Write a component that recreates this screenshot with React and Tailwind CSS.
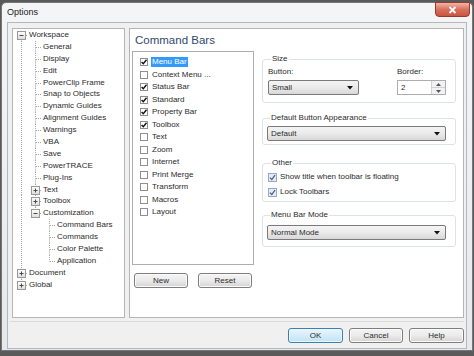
import React from 'react';

const TREE = [
  {
    label: 'Workspace',
    open: true,
    children: [
      'General', 'Display', 'Edit', 'PowerClip Frame', 'Snap to Objects', 'Dynamic Guides',
      'Alignment Guides', 'Warnings', 'VBA', 'Save', 'PowerTRACE', 'Plug-Ins',
      { label: 'Text', closed: true },
      { label: 'Toolbox', closed: true },
      { label: 'Customization', open: true, children: ['Command Bars', 'Commands', 'Color Palette', 'Application'] },
    ],
  },
  { label: 'Document', closed: true },
  { label: 'Global', closed: true },
];

const BARS = [
  ['Menu Bar', true], ['Context Menu ...', false], ['Status Bar', true], ['Standard', true],
  ['Property Bar', true], ['Toolbox', true], ['Text', false], ['Zoom', false], ['Internet', false],
  ['Print Merge', false], ['Transform', false], ['Macros', false], ['Layout', false],
];

function flatten(nodes, guides = [], rows = [], root = true) {
  nodes.forEach((n, i) => {
    const node = typeof n === 'string' ? { label: n } : n;
    const last = i === nodes.length - 1;
    rows.push({
      label: node.label,
      guides,
      last,
      first: root && i === 0,
      toggle: node.open ? 'minus' : node.closed ? 'plus' : null,
    });
    if (node.open) flatten(node.children, [...guides, !last], rows, false);
  });
  return rows;
}

const LINE = '#a5a5a5';

function Guide({ on }) {
  return (
    <svg width="14" height="12" className="shrink-0">
      {on && <line x1="7.5" y1="0" x2="7.5" y2="12" stroke={LINE} strokeDasharray="1 1" />}
    </svg>
  );
}

function Connector({ first, last, toggle }) {
  return (
    <svg width="14" height="12" className="shrink-0">
      {!first && <line x1="7.5" y1="0" x2="7.5" y2="6.5" stroke={LINE} strokeDasharray="1 1" />}
      {!last && <line x1="7.5" y1="6.5" x2="7.5" y2="12" stroke={LINE} strokeDasharray="1 1" />}
      <line x1="8" y1="6.5" x2="14" y2="6.5" stroke={LINE} strokeDasharray="1 1" />
      {toggle && (
        <>
          <defs>
            <linearGradient id="tg" x1="0" y1="0" x2="0" y2="1">
              <stop offset="0" stopColor="#ffffff" />
              <stop offset="1" stopColor="#dcdcdc" />
            </linearGradient>
          </defs>
          <rect x="3.5" y="2.5" width="8" height="8" fill="url(#tg)" stroke="#999999" />
          <line x1="5.5" y1="6.5" x2="9.5" y2="6.5" stroke="#4a4a4a" />
          {toggle === 'plus' && <line x1="7.5" y1="4.5" x2="7.5" y2="8.5" stroke="#4a4a4a" />}
        </>
      )}
    </svg>
  );
}

function Tree() {
  const rows = flatten(TREE);
  return (
    <div className="w-[113px] h-[290px] bg-white border border-[#b5b5b5] pl-[1px] overflow-hidden">
      {rows.map((r) => (
        <div key={r.label} className="flex items-center h-[11.9px]">
          {r.guides.map((g, i) => <Guide key={i} on={g} />)}
          <Connector first={r.first} last={r.last} toggle={r.toggle} />
          <span className="ml-[1px] whitespace-nowrap leading-[11.9px]">{r.label}</span>
        </div>
      ))}
    </div>
  );
}

function Check({ on }) {
  return (
    <svg width="8" height="8" className="shrink-0">
      <rect x="0.5" y="0.5" width="7" height="7" fill="#ffffff" stroke="#8e8f8f" />
      {on && <path d="M1.6 3.9 L3.3 5.7 L6.5 1.8" fill="none" stroke="#111" strokeWidth="1.4" />}
    </svg>
  );
}

function BlueCheck() {
  return (
    <svg width="9" height="9" className="shrink-0">
      <rect x="0.5" y="0.5" width="8" height="8" fill="#e4ecf6" stroke="#97aac4" />
      <path d="M2 4.6 L3.8 6.6 L7 2.2" fill="none" stroke="#44597f" strokeWidth="1.2" />
    </svg>
  );
}

function Arrow() {
  return (
    <svg width="6" height="4" className="shrink-0">
      <polygon points="0,0 6,0 3,3.5" fill="#111" />
    </svg>
  );
}

function Combo({ value, className = '' }) {
  return (
    <div className={`h-[15px] flex items-center justify-between pl-[3px] pr-[5px] border border-[#7a7a7a] rounded-[2px] bg-linear-to-b from-[#f4f4f4] via-[#eaeaea] to-[#d8d8d8] ${className}`}>
      <span className="leading-none">{value}</span>
      <Arrow />
    </div>
  );
}

function Spinner() {
  return (
    <div className="w-[49px] h-[15px] flex border border-[#abadb3] bg-white">
      <span className="flex-1 pl-[3px] leading-[13px]">2</span>
      <div className="w-[14px] flex flex-col border-l border-[#d0d0d0]">
        <div className="flex-1 flex items-center justify-center bg-[#f2f2f2] border-b border-[#d0d0d0]">
          <svg width="5" height="3"><polygon points="2.5,0 5,3 0,3" fill="#555" /></svg>
        </div>
        <div className="flex-1 flex items-center justify-center bg-[#f2f2f2]">
          <svg width="5" height="3"><polygon points="0,0 5,0 2.5,3" fill="#555" /></svg>
        </div>
      </div>
    </div>
  );
}

function Group({ title, className = '', children }) {
  return (
    <fieldset className={`border border-[#dde2e7] rounded-[3px] ${className}`}>
      <legend className="ml-[3px] px-[1px] leading-[10px]">{title}</legend>
      {children}
    </fieldset>
  );
}

function Button({ children, primary, className = '' }) {
  return (
    <div
      className={`h-[15px] flex items-center justify-center rounded-[3px] border ${
        primary
          ? 'border-[#3c7fb1] bg-linear-to-b from-[#eaf6fd] to-[#bfe3f6] shadow-[inset_0_0_0_1px_#e8f6fd]'
          : 'border-[#7d7d7d] bg-linear-to-b from-[#f4f4f4] via-[#ebebeb] to-[#d4d4d4] shadow-[inset_0_0_0_1px_#fbfbfb]'
      } ${className}`}
    >
      {children}
    </div>
  );
}

export default function App() {
  return (
    <div className="w-[474px] h-[356px] bg-[#5a5a5a] pt-[2px] px-[1px] pb-[5px] overflow-hidden font-['Liberation_Sans',Arial,sans-serif] text-[8px] text-[#2b2b2b]">
      <div className="h-full flex flex-col rounded-t-[5px] border border-[#767676] bg-linear-to-b from-[#f4f5f6] to-[#e6e9ec] px-[5px] pb-[1px]">
        {/* title bar */}
        <div className="h-[19px] shrink-0 flex items-start justify-between">
          <span className="mt-[4px] text-[9px] leading-[10px] text-[#222]">Options</span>
          <div className="w-[35px] h-[15px] -mr-[3px] -mt-[1px] rounded-b-[4px] border border-[#9a3a2c] bg-linear-to-b from-[#f0b4a8] via-[#d8705c] to-[#c85440] flex items-center justify-center">
            <svg width="9" height="8">
              <path d="M1.5 1 L7.5 7 M7.5 1 L1.5 7" stroke="#ffffff" strokeWidth="1.8" />
            </svg>
          </div>
        </div>

        {/* client */}
        <div className="flex-1 flex flex-col bg-[#f0f0f0] border border-[#b0b8c1]">
          <div className="flex gap-[4px] pl-[4px] pr-[2px] pt-[5px]">
            <Tree />

            <div className="flex-1 h-[290px] bg-white border border-[#b5b5b5] flex flex-col">
              <div className="pl-[5px] pt-[4px] h-[22px] text-[11.5px] leading-[14px] text-[#2f4a70]">Command Bars</div>

              <div className="flex pl-[2px]">
                <div className="w-[122px] flex flex-col">
                  <div className="h-[214px] border border-[#abadb3] bg-white pt-[4px] pl-[7px]">
                    {BARS.map(([label, on], i) => (
                      <div key={label} className="h-[12.5px] flex items-center">
                        <Check on={on} />
                        <span
                          className={`ml-[3px] px-[1px] leading-[10px] whitespace-nowrap ${
                            i === 0 ? 'bg-[#3399ff] text-white' : ''
                          }`}
                        >
                          {label}
                        </span>
                      </div>
                    ))}
                  </div>
                  <div className="flex gap-[10px] pl-[2px] mt-[8px]">
                    <Button className="w-[54px]">New</Button>
                    <Button className="w-[54px]">Reset</Button>
                  </div>
                </div>

                <div className="w-[194px] ml-[8px] pt-[3px] flex flex-col">
                  <Group title="Size" className="pl-[5px] pr-[9px] pt-[3px] pb-[7px]">
                    <div className="flex justify-between">
                      <div className="flex flex-col gap-[3px]">
                        <span className="leading-[10px]">Button:</span>
                        <Combo value="Small" className="w-[91px]" />
                      </div>
                      <div className="flex flex-col gap-[3px]">
                        <span className="leading-[10px]">Border:</span>
                        <Spinner />
                      </div>
                    </div>
                  </Group>

                  <Group title="Default Button Appearance" className="mt-[10px] pl-[4px] pr-[9px] pt-[3px] pb-[3px]">
                    <Combo value="Default" />
                  </Group>

                  <Group title="Other" className="mt-[13px] pl-[5px] pt-[3px] pb-[3px]">
                    <div className="h-[12px] flex items-center gap-[3px]">
                      <BlueCheck />
                      <span className="leading-[10px]">Show title when toolbar is floating</span>
                    </div>
                    <div className="h-[12px] mt-[3px] flex items-center gap-[3px]">
                      <BlueCheck />
                      <span className="leading-[10px]">Lock Toolbars</span>
                    </div>
                  </Group>

                  <Group title="Menu Bar Mode" className="mt-[8px] pl-[4px] pr-[9px] pt-[5px] pb-[6px]">
                    <Combo value="Normal Mode" />
                  </Group>
                </div>
              </div>
            </div>
          </div>

          {/* footer */}
          <div className="mt-[3px] mx-[2px] border-t border-[#dadada]" />
          <div className="flex justify-end gap-[6px] pr-[2px] pt-[6px]">
            <Button primary className="w-[55px]">OK</Button>
            <Button className="w-[54px]">Cancel</Button>
            <Button className="w-[55px]">Help</Button>
          </div>
        </div>
      </div>
    </div>
  );
}
